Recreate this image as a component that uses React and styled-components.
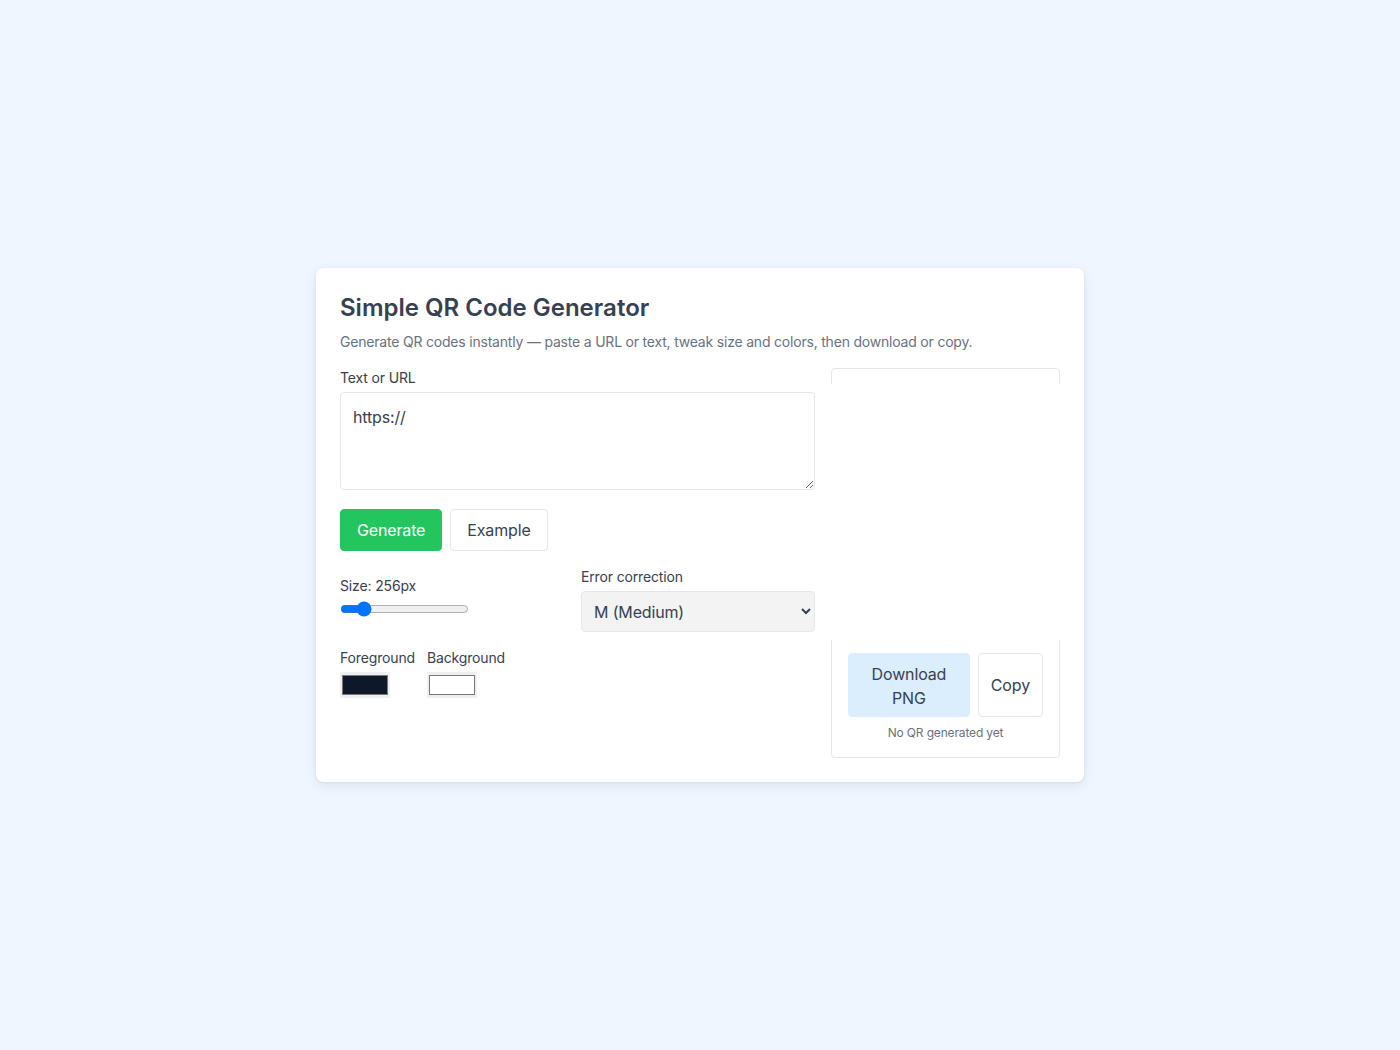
import React, { useState } from "react";
import styled, { createGlobalStyle } from "styled-components";

const Global = createGlobalStyle`
  * { box-sizing: border-box; }
  html, body { margin: 0; padding: 0; }
  body {
    background: #eff6ff;
    font-family: Inter, "Noto Sans", Arial, sans-serif;
    color: #374151;
    letter-spacing: -0.15px;
  }
  button, select, textarea, input { letter-spacing: inherit; }
`;

const Page = styled.div`
  min-height: 1050px;
  display: flex;
  align-items: center;
  justify-content: center;
`;

const Card = styled.div`
  width: 768px;
  background: #ffffff;
  border-radius: 8px;
  box-shadow: 0 4px 14px rgba(15, 23, 42, 0.08), 0 1px 3px rgba(15, 23, 42, 0.06);
  padding: 24px;
`;

const Title = styled.h1`
  margin: 0;
  font-size: 24px;
  line-height: 32px;
  font-weight: 600;
  color: #374151;
  letter-spacing: 0;
`;

const Subtitle = styled.p`
  margin: 8px 0 16px;
  font-size: 14px;
  line-height: 20px;
  color: #6b7280;
  letter-spacing: -0.2px;
`;

const Grid = styled.div`
  display: grid;
  grid-template-columns: 475px 229px;
  gap: 16px;
  align-items: start;
`;

const Column = styled.div`
  display: flex;
  flex-direction: column;
`;

const Label = styled.label`
  display: block;
  font-size: 14px;
  line-height: 20px;
  color: #374151;
  margin-bottom: ${(p) => p.$mb ?? 4}px;
`;

const TextArea = styled.textarea`
  width: 100%;
  height: 98px;
  border: 1px solid #e5e7eb;
  border-radius: 4px;
  padding: 12px;
  font-family: inherit;
  font-size: 16px;
  line-height: 24px;
  color: #374151;
  resize: vertical;
  outline: none;
`;

const ButtonRow = styled.div`
  display: flex;
  gap: ${(p) => p.$gap ?? 8}px;
  margin-top: ${(p) => p.$mt ?? 0}px;
  width: ${(p) => (p.$full ? "100%" : "auto")};
`;

const Button = styled.button`
  font-family: inherit;
  font-size: 16px;
  line-height: 24px;
  padding: ${(p) => (p.$compact ? "8px 12px" : "8px 16px")};
  border-radius: 4px;
  cursor: pointer;
  border: 1px solid ${(p) => (p.$variant === "primary" ? "#22c55e" : p.$variant === "soft" ? "#dbeefe" : "#e5e7eb")};
  background: ${(p) => (p.$variant === "primary" ? "#22c55e" : p.$variant === "soft" ? "#dbeefe" : "#ffffff")};
  color: ${(p) => (p.$variant === "primary" ? "#ffffff" : "#374151")};
  flex: ${(p) => (p.$grow ? 1 : "none")};
  height: ${(p) => p.$h ?? 42}px;
`;

const Options = styled.div`
  display: grid;
  grid-template-columns: 225px 234px;
  gap: 16px;
  align-items: center;
  margin-top: 16px;
`;

const SizeField = styled.div`
  margin-bottom: 6px;
`;

const Range = styled.input`
  display: block;
  margin: 0;
  width: 129px;
  height: 16px;
  accent-color: #0075ff;
`;

const Select = styled.select`
  width: 100%;
  height: 41px;
  font-family: inherit;
  font-size: 16px;
  color: #374151;
  background: #f3f3f3;
  border: 1px solid #e5e7eb;
  border-radius: 4px;
  padding: 0 8px;
  outline: none;
`;

const Colors = styled.div`
  display: flex;
  gap: 12px;
  margin-top: 16px;
`;

const ColorField = styled.div`
  display: flex;
  flex-direction: column;
`;

const ColorInput = styled.input`
  margin: 0;
  width: 50px;
  height: 26px;
  border: none;
  background: #efefef;
  padding: 0;
  cursor: pointer;
  &::-webkit-color-swatch-wrapper {
    padding: 3px 2px;
  }
  &::-webkit-color-swatch {
    border: 1px solid #777777;
    border-radius: 0;
  }
`;

const Panel = styled.div`
  border: 1px solid #e5e7eb;
  border-radius: 4px;
  padding: 15px 16px 16px;
  display: flex;
  flex-direction: column;
  align-items: center;
`;

const Canvas = styled.div`
  width: 256px;
  height: 256px;
  flex: none;
  background: #ffffff;
`;

const Status = styled.div`
  margin-top: 8px;
  font-size: 12px;
  line-height: 16px;
  color: #6b7280;
  text-align: center;
`;

export default function App() {
  const [text, setText] = useState("https://");
  const [size, setSize] = useState(256);
  const [level, setLevel] = useState("M");
  const [fg, setFg] = useState("#0f172a");
  const [bg, setBg] = useState("#ffffff");

  return (
    <>
      <Global />
      <Page>
        <Card>
          <Title>Simple QR Code Generator</Title>
          <Subtitle>
            Generate QR codes instantly — paste a URL or text, tweak size and colors, then download or copy.
          </Subtitle>
          <Grid>
            <Column>
              <Label>Text or URL</Label>
              <TextArea value={text} onChange={(e) => setText(e.target.value)} />
              <ButtonRow $mt={19}>
                <Button $variant="primary">Generate</Button>
                <Button>Example</Button>
              </ButtonRow>
              <Options>
                <SizeField>
                  <Label $mb={5}>Size: {size}px</Label>
                  <Range
                    type="range"
                    min={128}
                    max={1024}
                    step={8}
                    value={size}
                    onChange={(e) => setSize(Number(e.target.value))}
                  />
                </SizeField>
                <div>
                  <Label $mb={4}>Error correction</Label>
                  <Select value={level} onChange={(e) => setLevel(e.target.value)}>
                    <option value="L">L (Low)</option>
                    <option value="M">M (Medium)</option>
                    <option value="Q">Q (Quartile)</option>
                    <option value="H">H (High)</option>
                  </Select>
                </div>
              </Options>
              <Colors>
                <ColorField>
                  <Label $mb={4}>Foreground</Label>
                  <ColorInput type="color" value={fg} onChange={(e) => setFg(e.target.value)} />
                </ColorField>
                <ColorField>
                  <Label $mb={4}>Background</Label>
                  <ColorInput type="color" value={bg} onChange={(e) => setBg(e.target.value)} />
                </ColorField>
              </Colors>
            </Column>
            <Panel>
              <Canvas />
              <ButtonRow $mt={13} $gap={8} $full>
                <Button $variant="soft" $grow $h={64}>
                  Download
                  <br />
                  PNG
                </Button>
                <Button $h={64} $compact>
                  Copy
                </Button>
              </ButtonRow>
              <Status>No QR generated yet</Status>
            </Panel>
          </Grid>
        </Card>
      </Page>
    </>
  );
}
